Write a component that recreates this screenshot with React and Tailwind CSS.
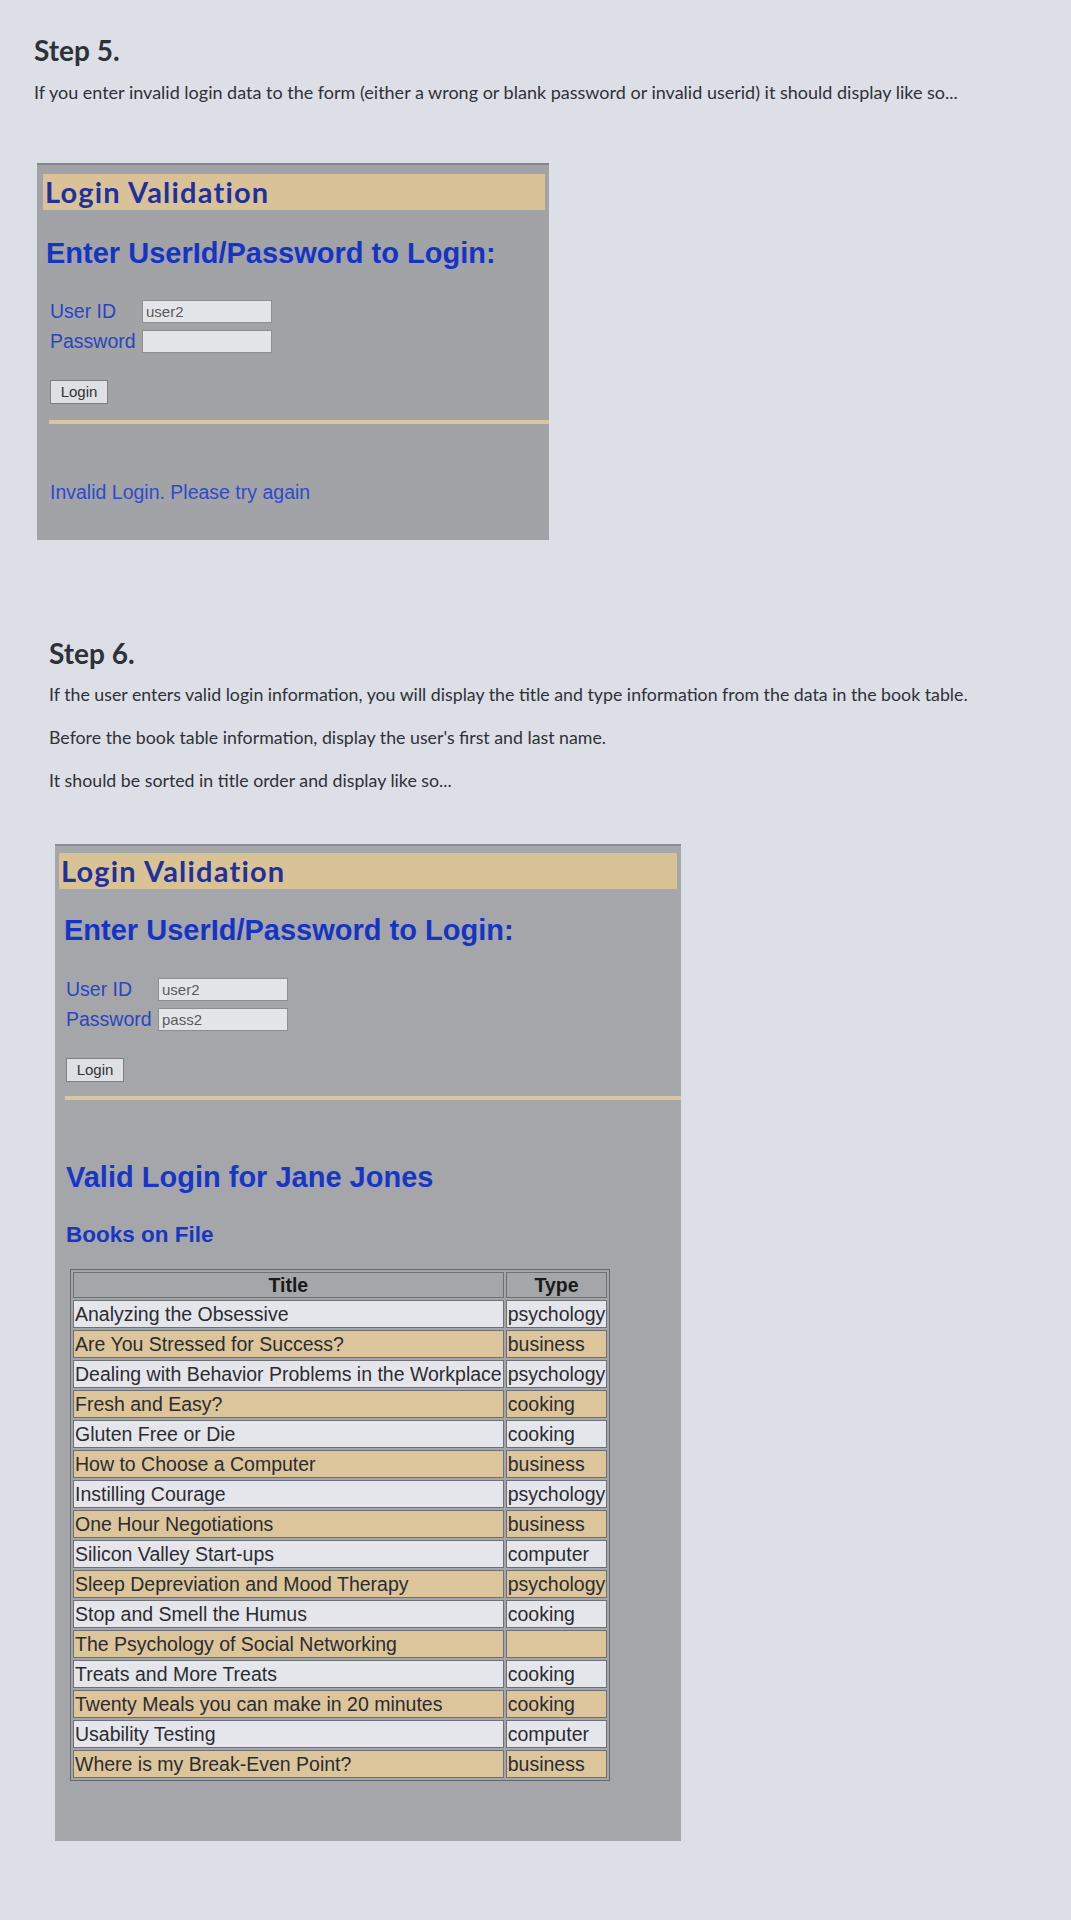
import React from 'react';

const books = [
    { title: 'Analyzing the Obsessive', type: 'psychology' },
    { title: 'Are You Stressed for Success?', type: 'business' },
    { title: 'Dealing with Behavior Problems in the Workplace', type: 'psychology' },
    { title: 'Fresh and Easy?', type: 'cooking' },
    { title: 'Gluten Free or Die', type: 'cooking' },
    { title: 'How to Choose a Computer', type: 'business' },
    { title: 'Instilling Courage', type: 'psychology' },
    { title: 'One Hour Negotiations', type: 'business' },
    { title: 'Silicon Valley Start-ups', type: 'computer' },
    { title: 'Sleep Depreviation and Mood Therapy', type: 'psychology' },
    { title: 'Stop and Smell the Humus', type: 'cooking' },
    { title: 'The Psychology of Social Networking', type: '' },
    { title: 'Treats and More Treats', type: 'cooking' },
    { title: 'Twenty Meals you can make in 20 minutes', type: 'cooking' },
    { title: 'Usability Testing', type: 'computer' },
    { title: 'Where is my Break-Even Point?', type: 'business' },
];

const LoginForm = ({ password }) => (
    <div className="font-['Liberation_Sans',Arial,sans-serif]">
        <div className="grid grid-cols-[92px_130px] gap-y-[7px] items-center text-[19.5px] text-[#2a45c2]">
            <span className="leading-[23px]">User ID</span>
            <div className="h-[23px] bg-[#e4e5e9] border border-[#8d8e92] pl-[3px] text-[15px] leading-[21px] text-[#5a5a5e]">user2</div>
            <span className="leading-[23px]">Password</span>
            <div className="h-[23px] bg-[#e4e5e9] border border-[#8d8e92] pl-[3px] text-[15px] leading-[21px] text-[#5a5a5e]">{password}</div>
        </div>
        <button className="mt-[27px] h-[24px] w-[58px] bg-[#dfe0e3] border border-[#7e7f83] text-[15px] text-[#333] leading-[22px]">
            Login
        </button>
    </div>
);

const PanelHeader = () => (
    <div className="h-[36px] bg-[#d9c396] flex items-center">
        <h1 className="pl-[2px] font-['Lato',sans-serif] font-bold text-[29px] tracking-[1.2px] leading-[34px] text-[#21309c]">Login Validation</h1>
    </div>
);

const App = () => {
    return (
        <div className="min-h-[1920px] bg-[#dddfe6] pt-[33px] font-['Lato',sans-serif] text-[#2d3238]">
            <div className="pl-[34px]">
                <h2 className="font-bold text-[28px] leading-[34px]">Step 5.</h2>
                <p className="mt-[14px] text-[18px] leading-[22px]">
                    If you enter invalid login data to the form (either a wrong or blank password or invalid userid) it should display like so...
                </p>

                {/* invalid login panel */}
                <div className="mt-[60px] ml-[3px] w-[512px] h-[377px] bg-[#a2a3a6] border-t-2 border-[#85868a] pt-[9px]">
                    <div className="ml-[6px] mr-[4px]">
                        <PanelHeader />
                    </div>
                    <div className="pl-[9px]">
                        <h2 className="mt-[26px] font-['Liberation_Sans',Arial,sans-serif] font-bold text-[29px] leading-[34px] text-[#1634c4]">
                            Enter UserId/Password to Login:
                        </h2>
                        <div className="mt-[30px] pl-[4px]">
                            <LoginForm password="" />
                        </div>
                    </div>
                    <div className="mt-[16px] ml-[12px] h-[4px] bg-[#d6c6a2]" />
                    <p className="mt-[57px] pl-[13px] font-['Liberation_Sans',Arial,sans-serif] text-[19.5px] leading-[23px] text-[#2f4bc8]">
                        Invalid Login. Please try again
                    </p>
                </div>
            </div>

            <div className="pl-[49px] mt-[96px]">
                <h2 className="font-bold text-[28px] leading-[34px]">Step 6.</h2>
                <p className="mt-[13px] text-[17.75px] leading-[22px]">
                    If the user enters valid login information, you will display the title and type information from the data in the book table.
                </p>
                <p className="mt-[21px] text-[17.75px] leading-[22px]">
                    Before the book table information, display the user's first and last name.
                </p>
                <p className="mt-[21px] text-[17.75px] leading-[22px]">
                    It should be sorted in title order and display like so...
                </p>

                {/* valid login panel */}
                <div className="mt-[53px] ml-[6px] w-[626px] h-[997px] bg-[#a5a6a9] border-t-2 border-[#8a8b8f] pt-[7px]">
                    <div className="ml-[4px] mr-[4px]">
                        <PanelHeader />
                    </div>
                    <div className="pl-[9px]">
                        <h2 className="mt-[24px] font-['Liberation_Sans',Arial,sans-serif] font-bold text-[29px] leading-[34px] text-[#1634c4]">
                            Enter UserId/Password to Login:
                        </h2>
                        <div className="mt-[31px] pl-[2px]">
                            <LoginForm password="pass2" />
                        </div>
                    </div>
                    <div className="mt-[14px] ml-[10px] h-[4px] bg-[#d6c6a2]" />
                    <div className="pl-[11px] font-['Liberation_Sans',Arial,sans-serif]">
                        <h2 className="mt-[60px] font-bold text-[29px] leading-[34px] text-[#1736c6]">Valid Login for Jane Jones</h2>
                        <h3 className="mt-[28px] font-bold text-[22.5px] leading-[26px] text-[#1736c6]">Books on File</h3>
                        <table className="mt-[21px] ml-[4px] border-separate border-spacing-[2px] border border-[#66676b] text-[19.5px] leading-[24px] text-[#2c2c30]">
                            <thead>
                                <tr>
                                    <th className="border border-[#6f7074] px-[1px] font-bold text-center leading-[24px] text-[#1a1a1a]">Title</th>
                                    <th className="border border-[#6f7074] px-[1px] font-bold text-center leading-[24px] text-[#1a1a1a]">Type</th>
                                </tr>
                            </thead>
                            <tbody>
                                {books.map((b, i) => (
                                    <tr key={b.title} className={i % 2 === 0 ? 'bg-[#e5e6eb]' : 'bg-[#dcc59b]'}>
                                        <td className="border border-[#6f7074] px-[1px] py-[1px] whitespace-nowrap">{b.title}</td>
                                        <td className="border border-[#6f7074] px-[1px] py-[1px] whitespace-nowrap">{b.type}</td>
                                    </tr>
                                ))}
                            </tbody>
                        </table>
                    </div>
                </div>
            </div>
        </div>
    );
};

export default App;
